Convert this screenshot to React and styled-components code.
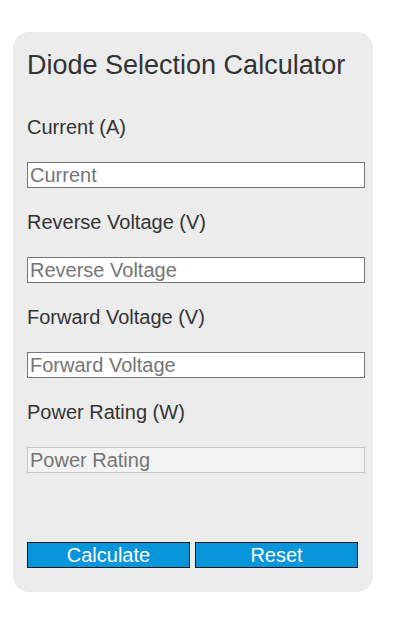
import styled, { createGlobalStyle } from "styled-components";

const GlobalStyle = createGlobalStyle`
  body {
    margin: 0;
    background: #ffffff;
    font-family: "Liberation Sans", Arial, sans-serif;
  }
`;

const Page = styled.div`
  padding: 32px 0 0 13px;
`;

const Card = styled.div`
  width: 360px;
  box-sizing: border-box;
  padding: 18px 8px 24px 14px;
  background: #ececec;
  border-radius: 16px;
  display: flex;
  flex-direction: column;
`;

const Title = styled.h1`
  margin: 0 0 35px;
  font-size: 27px;
  font-weight: normal;
  line-height: 31px;
  color: #333333;
`;

const Field = styled.div`
  display: flex;
  flex-direction: column;
  gap: 23px;
  margin-bottom: 23px;
`;

const Label = styled.label`
  font-size: 20px;
  line-height: 23px;
  color: #333333;
`;

const Input = styled.input`
  width: 338px;
  height: 26px;
  box-sizing: border-box;
  margin: 0;
  padding: 0 2px;
  font-family: "Liberation Sans", Arial, sans-serif;
  font-size: 20px;
  color: #333333;
  background: ${(p) => (p.disabled ? "#f3f3f3" : "#ffffff")};
  border: 1px solid ${(p) => (p.disabled ? "#c6c6c6" : "#767676")};
  outline: none;

  &::placeholder {
    color: #757575;
  }
`;

const Buttons = styled.div`
  display: flex;
  gap: 5px;
  margin-top: 46px;
`;

const Button = styled.button`
  width: 163px;
  height: 26px;
  box-sizing: border-box;
  margin: 0;
  padding: 0;
  font-family: "Liberation Sans", Arial, sans-serif;
  font-size: 20px;
  line-height: 24px;
  color: #ffffff;
  background: #0795dc;
  border: 1px solid #1a1a1a;
  cursor: pointer;
`;

const fields = [
  { label: "Current (A)", placeholder: "Current" },
  { label: "Reverse Voltage (V)", placeholder: "Reverse Voltage" },
  { label: "Forward Voltage (V)", placeholder: "Forward Voltage" },
  { label: "Power Rating (W)", placeholder: "Power Rating", disabled: true },
];

const App = () => (
  <>
    <GlobalStyle />
    <Page>
      <Card>
        <Title>Diode Selection Calculator</Title>
        {fields.map((f) => (
          <Field key={f.label}>
            <Label>{f.label}</Label>
            <Input placeholder={f.placeholder} disabled={f.disabled} />
          </Field>
        ))}
        <Buttons>
          <Button>Calculate</Button>
          <Button>Reset</Button>
        </Buttons>
      </Card>
    </Page>
  </>
);

export default App;
